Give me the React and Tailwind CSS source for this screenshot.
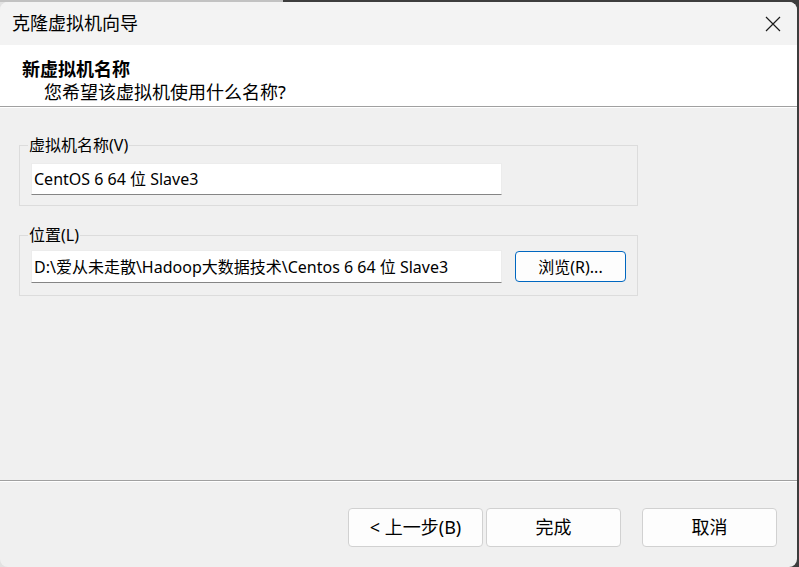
import React from 'react';

const FONT = "font-['Noto_Sans','Noto_Sans_CJK_SC',sans-serif]";

const CloseIcon = () => (
  <svg width="16" height="16" viewBox="0 0 16 16" fill="none">
    <path d="M1 1 L15 15 M15 1 L1 15" stroke="#1b1b1b" strokeWidth="1.2" />
  </svg>
);

const GroupBox = ({ label, className = '', children }) => (
  <fieldset className={`ml-[19px] w-[619px] border border-[#dcdcdc] ${className}`}>
    <legend className="ml-[8px] px-[1px] text-[16px] leading-[20px] text-black">{label}</legend>
    {children}
  </fieldset>
);

const TextField = ({ value, className = '' }) => (
  <div
    className={`w-[471px] bg-white border border-[#ececec] border-b-[#858585] pl-[2px] flex items-center text-[16px] text-black whitespace-nowrap overflow-hidden ${className}`}
  >
    {value}
  </div>
);

const FooterButton = ({ children }) => (
  <button className="w-[135px] h-[39px] rounded-[4px] border border-[#d1d1d1] bg-[#fdfdfd] text-[18px] text-black">
    {children}
  </button>
);

export default function App() {
  return (
    <div className={`relative w-[799px] h-[567px] overflow-hidden flex ${FONT}`}>
      {/* desktop behind */}
      <div className="w-[283px] bg-[#e2e2e2] border-t-2 border-[#c2c2c2]" />
      <div className="flex-1 bg-[#3d3d3d]" />

      {/* dialog window */}
      <div className="absolute left-0 top-[2px] w-[797px] h-[565px] rounded-[8px] overflow-hidden bg-[#f0f0f0] flex flex-col">
        {/* title bar */}
        <div className="h-[43px] shrink-0 bg-[#f3f3f3] flex items-center justify-between pl-[12px] pr-[16px]">
          <span className="text-[18px] text-black">克隆虚拟机向导</span>
          <CloseIcon />
        </div>

        {/* header */}
        <div className="h-[62px] shrink-0 bg-white border-b border-[#a0a0a0] shadow-[0_1px_0_#ffffff] pt-[13px] pl-[22px]">
          <div className="text-[18px] leading-[23px] font-bold text-black">新虚拟机名称</div>
          <div className="text-[18px] leading-[23px] text-black pl-[22px]">您希望该虚拟机使用什么名称?</div>
        </div>

        {/* body */}
        <div className="flex-1 pt-[28px]">
          <GroupBox label="虚拟机名称(V)" className="pb-[10px]">
            <TextField value="CentOS 6 64 位 Slave3" className="ml-[11px] mt-[8px] h-[32px]" />
          </GroupBox>

          <GroupBox label="位置(L)" className="mt-[19px] pb-[12px]">
            <div className="flex items-center ml-[11px] mt-[5px]">
              <TextField value="D:\爱从未走散\Hadoop大数据技术\Centos 6 64 位 Slave3" className="h-[33px]" />
              <button className="ml-[13px] w-[111px] h-[31px] rounded-[4px] border border-[#0067c0] bg-[#fdfdfd] text-[16px] text-black">
                浏览(R)...
              </button>
            </div>
          </GroupBox>
        </div>

        {/* footer */}
        <div className="h-[87px] shrink-0 border-t border-[#a0a0a0]">
          <div className="h-full border-t border-white flex justify-end items-start pt-[26px] pr-[20px]">
            <div className="flex">
              <FooterButton>&lt; 上一步(B)</FooterButton>
              <div className="ml-[3px]">
                <FooterButton>完成</FooterButton>
              </div>
              <div className="ml-[21px]">
                <FooterButton>取消</FooterButton>
              </div>
            </div>
          </div>
        </div>
      </div>
    </div>
  );
}
